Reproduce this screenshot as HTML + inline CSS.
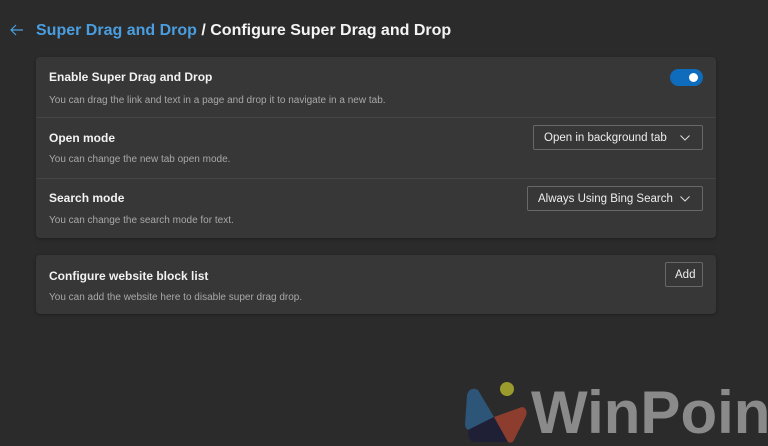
<!DOCTYPE html>
<html><head><style>
body{margin:0;width:768px;height:444px;background:#2b2b2b;font-family:"Liberation Sans",sans-serif;position:relative;overflow:hidden;color:#fff}
.a{position:absolute}
.card{position:absolute;left:36px;width:680px;background:#373737;border-radius:4px;box-shadow:0 1px 3px rgba(0,0,0,.3)}
.t{position:absolute;left:13px;font-size:12px;font-weight:bold;color:#f2f2f2}
.s{position:absolute;left:13px;font-size:10px;color:#a8a8a8}
.sep{position:absolute;left:0;right:0;height:1px;background:#444}
.dd{position:absolute;border:1px solid #686868;border-radius:2px;height:25px;font-size:11.5px;color:#eee;line-height:24px;box-sizing:border-box;padding-left:10px}
.dd svg{position:absolute;right:12px;top:9px}
</style></head><body>
<svg class="a" style="left:10px;top:24px" width="14" height="12"><path d="M13 6H1M6 1L1 6L6 11" stroke="#4b9fe0" stroke-width="1.2" fill="none"/></svg>
<div class="a" style="left:36px;top:22px;font-size:16px;font-weight:bold;white-space:nowrap"><span style="color:#4a9ee0">Super Drag and Drop</span> <span style="color:#f4f4f4">/ Configure Super Drag and Drop</span></div>
<div class="card" style="top:57px;height:181px">
<div class="t" style="top:13px">Enable Super Drag and Drop</div>
<div class="s" style="top:38px">You can drag the link and text in a page and drop it to navigate in a new tab.</div>
<div class="a" style="left:634px;top:12px;width:33px;height:17px;border-radius:9px;background:#0f6cbd"><div class="a" style="left:19px;top:4px;width:9px;height:9px;border-radius:50%;background:#fff"></div></div>
<div class="sep" style="top:60px"></div>
<div class="t" style="top:74px">Open mode</div>
<div class="s" style="top:97px">You can change the new tab open mode.</div>
<div class="dd" style="left:497px;top:68px;width:170px">Open in background tab<svg width="10" height="6"><path d="M0.5 0.5L5 5L9.5 0.5" stroke="#ddd" fill="none"/></svg></div>
<div class="sep" style="top:121px"></div>
<div class="t" style="top:134px">Search mode</div>
<div class="s" style="top:158px">You can change the search mode for text.</div>
<div class="dd" style="left:491px;top:129px;width:176px">Always Using Bing Search<svg width="10" height="6"><path d="M0.5 0.5L5 5L9.5 0.5" stroke="#ddd" fill="none"/></svg></div>
</div>
<div class="card" style="top:255px;height:59px">
<div class="t" style="top:14px">Configure website block list</div>
<div class="s" style="top:37px">You can add the website here to disable super drag drop.</div>
<div class="dd" style="left:629px;top:7px;width:38px;padding-left:9px;line-height:24px">Add</div>
</div>
<svg class="a" style="left:462px;top:380px" width="70" height="64">
<path d="M5 15 Q8 6 16 10 L32 37 L6 50 Q3 48 3 44Z" fill="#2d5578"/>
<path d="M32 37 L6 50 Q5 62 14 62 L46 62Z" fill="#1f2036"/>
<path d="M32 37 L60 27 Q66 28 64 36 L52 60 Q50 64 46 62Z" fill="#8c3d2e"/>
<circle cx="45" cy="9" r="7" fill="#9b9a2c"/>
</svg>
<div class="a" style="left:531px;top:384px;font-size:60px;line-height:58px;font-weight:bold;color:#8a8a8a;letter-spacing:0;white-space:nowrap">WinPoint</div>
</body></html>
